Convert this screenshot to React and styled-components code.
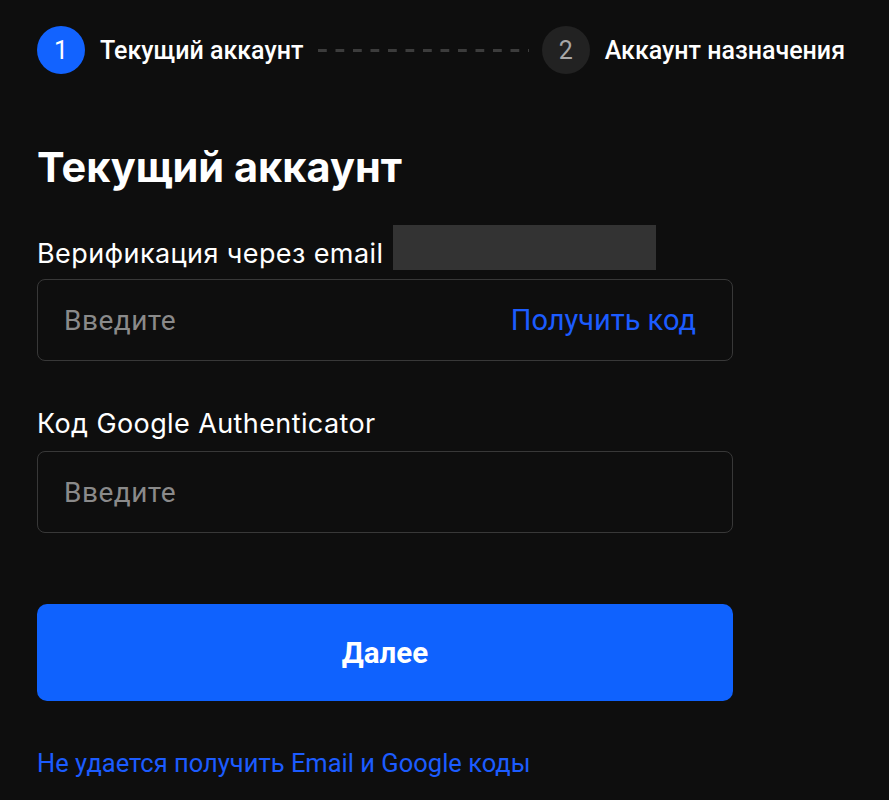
import styled, { createGlobalStyle } from "styled-components";

const GlobalStyle = createGlobalStyle`
body {
  margin: 0;
  background: #0e0e0e;
}
`

const App = () => {
    return (
        <>
        <GlobalStyle />
        <Page>
            <Stepper>
                <Step>
                    <StepNum active>1</StepNum>
                    <StepTitle>Текущий аккаунт</StepTitle>
                </Step>
                <Dashes />
                <Step>
                    <StepNum>2</StepNum>
                    <StepTitle>Аккаунт назначения</StepTitle>
                </Step>
            </Stepper>

            <Heading>Текущий аккаунт</Heading>

            <LabelRow>
                <Label>Верификация через email</Label>
                <Masked />
            </LabelRow>
            <Field>
                <Input placeholder="Введите" />
                <GetCode>Получить код</GetCode>
            </Field>

            <LabelRow second>
                <Label>Код Google Authenticator</Label>
            </LabelRow>
            <Field>
                <Input placeholder="Введите" />
            </Field>

            <Button>Далее</Button>

            <HelpLink>Не удается получить Email и Google коды</HelpLink>
        </Page>
        </>
    )
}

const Page = styled.div`
padding: 26px 0 0 37px;
width: 696px;
display: flex;
flex-direction: column;
`
const Stepper = styled.div`
display: flex;
align-items: center;
width: 808px;
`
const Step = styled.div`
display: flex;
align-items: center;
gap: 15px;
`
const StepNum = styled.div`
width: 48px;
height: 48px;
border-radius: 50%;
flex-shrink: 0;
display: flex;
align-items: center;
justify-content: center;
background: ${p => p.active ? "#1263ff" : "#222222"};
color: ${p => p.active ? "#ffffff" : "#a8a8a8"};
font-family: Roboto, "Liberation Sans", sans-serif;
font-size: 25px;
`
const StepTitle = styled.span`
color: #ffffff;
font-family: Roboto, "Liberation Sans", sans-serif;
font-size: 25px;
font-weight: 500;
white-space: nowrap;
`
const Dashes = styled.div`
flex: 1;
height: 3px;
margin: 0 13px 0 15px;
background-image: linear-gradient(to right, #3c3c3c 9px, transparent 9px);
background-size: 17.5px 3px;
`
const Heading = styled.h1`
margin: 69px 0 0;
color: #ffffff;
font-family: Inter, "Liberation Sans", sans-serif;
font-size: 41.5px;
font-weight: 700;
line-height: 48px;
`
const LabelRow = styled.div`
display: flex;
align-items: flex-end;
gap: 10px;
margin-top: ${p => p.second ? "47px" : "34px"};
margin-bottom: ${p => p.second ? "11px" : "9px"};
`
const Label = styled.label`
color: #ffffff;
font-family: Inter, "Liberation Sans", sans-serif;
font-size: 27px;
letter-spacing: 0.4px;
line-height: 31px;
margin-bottom: 1px;
white-space: nowrap;
`
const Masked = styled.div`
width: 263px;
height: 45px;
background: #333333;
`
const Field = styled.div`
height: 80px;
border: 1px solid #383838;
border-radius: 8px;
display: flex;
align-items: center;
padding: 0 36px 0 24px;
`
const Input = styled.input`
flex: 1;
min-width: 0;
background: transparent;
border: none;
outline: none;
color: #ffffff;
font-family: Roboto, "Liberation Sans", sans-serif;
font-size: 28px;
letter-spacing: 0.5px;
&::placeholder {
  color: #8a8a8a;
}
`
const GetCode = styled.span`
color: #1c5cff;
font-family: Roboto, "Liberation Sans", sans-serif;
font-size: 29px;
cursor: pointer;
`
const Button = styled.button`
margin-top: 71px;
height: 97px;
border: none;
border-radius: 10px;
background: #0f62fe;
color: #ffffff;
font-family: Roboto, "Liberation Sans", sans-serif;
font-size: 29.5px;
font-weight: 700;
cursor: pointer;
`
const HelpLink = styled.a`
margin-top: 49px;
color: #1c5cff;
font-family: Roboto, "Liberation Sans", sans-serif;
font-size: 25.5px;
line-height: 27px;
cursor: pointer;
`

export default App
